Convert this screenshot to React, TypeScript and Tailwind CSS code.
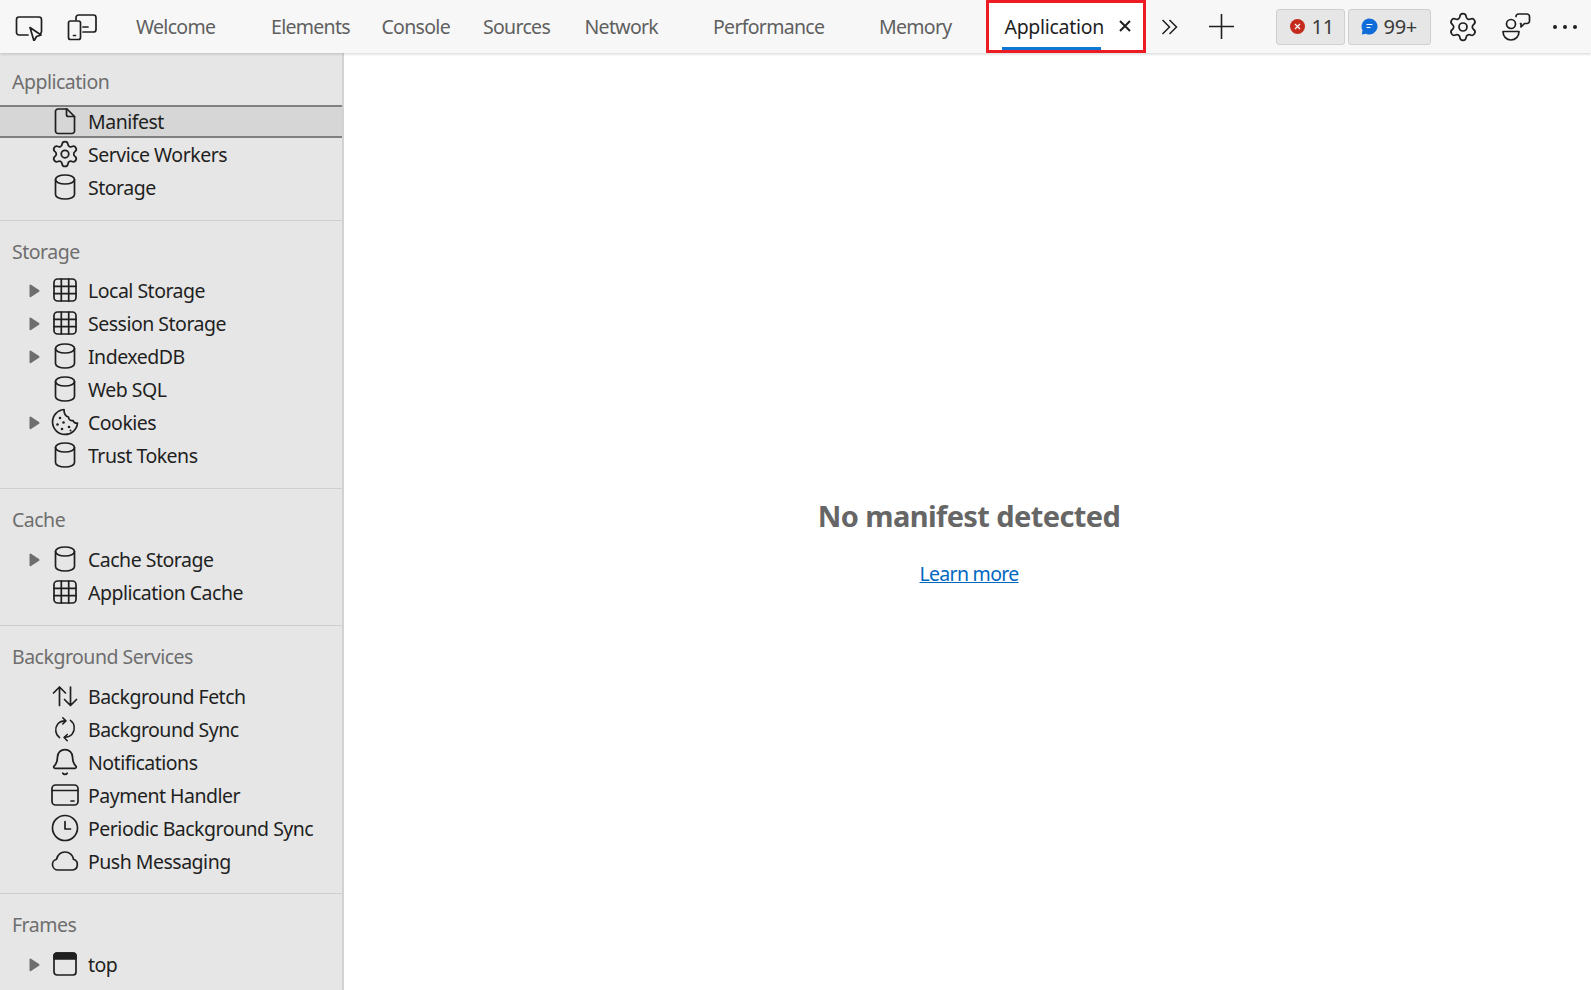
import React from "react";
import { Settings, Bell } from "lucide-react";

const S = ({ children, w = 28, h = 28, sw = 1.7, vb }: { children: React.ReactNode; w?: number; h?: number; sw?: number; vb?: string }) => (
  <svg width={w} height={h} viewBox={vb ?? `0 0 ${w} ${h}`} fill="none" stroke="#1f1f1f" strokeWidth={sw} strokeLinecap="round" strokeLinejoin="round">
    {children}
  </svg>
);

const Cyl = () => (
  <S>
    <path d="M4.500 6.500C4.500 4 8.500 2 14 2s9.500 2 9.500 4.500v15c0 2.500-4 4.500-9.500 4.500s-9.500-2-9.500-4.500z" />
    <path d="M4.500 6.500c0 2.500 4 4.500 9.500 4.500s9.500-2 9.500-4.500" />
  </S>
);
const Grid = () => (
  <S>
    <rect x="3" y="3" width="22" height="22" rx="3.500" />
    <path d="M10.300 3v22M17.700 3v22M3 10.300h22M3 17.700h22" />
  </S>
);
const Doc = () => (
  <S>
    <path d="M4.500 4.500A2.500 2.500 0 0 1 7 2h9l7.500 7.500v14.500a2.500 2.500 0 0 1-2.500 2.500H7A2.500 2.500 0 0 1 4.500 24z" />
    <path d="M15.500 2v5.500a2 2 0 0 0 2 2h6" />
  </S>
);
const Gear = () => <Settings size={30} strokeWidth={1.4} color="#1f1f1f" />;
const CookieI = () => (
  <S>
    <path d="M13 1.500A12.500 12.500 0 1 0 26.500 15c-2 .5-4-.5-4.500-2.500-2.500.5-4.500-1-4.500-3.500-2.500-.5-4.500-3.500-4.500-7.500z" />
    <g fill="#1f1f1f" stroke="none">
      <circle cx="9" cy="10" r="1.300" />
      <circle cx="6.500" cy="16.500" r="1.300" />
      <circle cx="12.500" cy="14.500" r="1.300" />
      <circle cx="11" cy="21" r="1.300" />
      <circle cx="18" cy="19" r="1.300" />
      <circle cx="19.500" cy="22.500" r="1" />
    </g>
  </S>
);
const Arrows = () => (
  <S>
    <path d="M8.500 23.500V5M2.500 11 8.500 5l6 6M19.500 5v18.500M13.500 17.500l6 6 6-6" />
  </S>
);
const Sync = () => (
  <S vb="-1.500 -1 31 30">
    <path d="M8 23.500C3 20 2.500 13 6 8.500c2-2.500 5-3.500 8.500-3.500" />
    <path d="M11.500 1.500 15 5l-3.500 3.500" />
    <path d="M20 4.500c5 3.500 5.500 10.500 2 15-2 2.500-5 3.500-8.500 3.500" />
    <path d="M16.500 27 13 23.500l3.500-3.500" />
  </S>
);
const BellI = () => <Bell size={30} strokeWidth={1.4} color="#1f1f1f" />;
const Card = () => (
  <S>
    <rect x="1" y="4" width="26" height="20" rx="3.500" />
    <path d="M1 9.500h26M20 20h3" />
  </S>
);
const ClockI = () => (
  <S>
    <circle cx="14" cy="14" r="12.500" />
    <path d="M14 7.500v7.500h5.500" />
  </S>
);
const CloudI = () => (
  <S>
    <path d="M7 23a5.500 5.500 0 0 1-1.500-10.800C6.800 7.500 10.300 5 14 5c4.500 0 8 3 8.500 7.300A5.500 5.500 0 0 1 21.500 23z" />
  </S>
);
const Win = () => (
  <S>
    <rect x="3" y="3" width="22" height="22" rx="3" />
    <path d="M3 6a3 3 0 0 1 3-3h16a3 3 0 0 1 3 3V9H3z" fill="#1f1f1f" />
  </S>
);

const Caret = () => (
  <svg width="12" height="14" viewBox="0 0 12 14">
    <path d="M1.500 1.500a1 1 0 0 1 1.500-.7l8 5.300a1 1 0 0 1 0 1.600l-8 5.300a1 1 0 0 1-1.500-.7z" fill="#6e6e6e" />
  </svg>
);

type Row = { label: string; icon: React.ReactNode; caret?: boolean; selected?: boolean };
type Group = { title: string; rows: Row[]; box: string; head: string };

const headBase = "pl-[12px] text-[#6e6e6e] tracking-[-0.5px] leading-[34px]";

const groups: Group[] = [
  {
    title: "Application",
    box: "pb-[16px]",
    head: "h-[52px] pt-[12px]",
    rows: [
      { label: "Manifest", icon: <Doc />, selected: true },
      { label: "Service Workers", icon: <Gear /> },
      { label: "Storage", icon: <Cyl /> },
    ],
  },
  {
    title: "Storage",
    box: "border-t border-[#cfcfcf] pb-[15.5px]",
    head: "h-[53.5px] pt-[14px]",
    rows: [
      { label: "Local Storage", icon: <Grid />, caret: true },
      { label: "Session Storage", icon: <Grid />, caret: true },
      { label: "IndexedDB", icon: <Cyl />, caret: true },
      { label: "Web SQL", icon: <Cyl /> },
      { label: "Cookies", icon: <CookieI />, caret: true },
      { label: "Trust Tokens", icon: <Cyl /> },
    ],
  },
  {
    title: "Cache",
    box: "border-t border-[#cfcfcf] pb-[16px]",
    head: "h-[54px] pt-[14px]",
    rows: [
      { label: "Cache Storage", icon: <Cyl />, caret: true },
      { label: "Application Cache", icon: <Grid /> },
    ],
  },
  {
    title: "Background Services",
    box: "border-t border-[#cfcfcf] pb-[15px]",
    head: "h-[54px] pt-[14px]",
    rows: [
      { label: "Background Fetch", icon: <Arrows /> },
      { label: "Background Sync", icon: <Sync /> },
      { label: "Notifications", icon: <BellI /> },
      { label: "Payment Handler", icon: <Card /> },
      { label: "Periodic Background Sync", icon: <ClockI /> },
      { label: "Push Messaging", icon: <CloudI /> },
    ],
  },
  {
    title: "Frames",
    box: "border-t border-[#cfcfcf] pb-[16px]",
    head: "h-[54px] pt-[14px]",
    rows: [{ label: "top", icon: <Win />, caret: true }],
  },
];

const tabs = [
  { t: "Welcome", c: "w-[135px]" },
  { t: "Elements", c: "w-[110.5px]" },
  { t: "Console", c: "w-[101.5px]" },
  { t: "Sources", c: "w-[101.5px]" },
  { t: "Network", c: "w-[128.5px]" },
  { t: "Performance", c: "w-[166px]" },
  { t: "Memory", c: "w-[107px]" },
];

const Inspect = () => (
  <S w={28} h={28} sw={1.7}>
    <path d="M13 22H4a2.500 2.500 0 0 1-2.500-2.500v-13A2.500 2.500 0 0 1 4 4h20a2.500 2.500 0 0 1 2.500 2.500v12a2.500 2.500 0 0 1-1 2" />
    <path d="M15 14.500 26 22l-4.500 1.500-2.500 4.500z" />
  </S>
);
const Device = () => (
  <S w={30} h={28} sw={1.7}>
    <path d="M9 7V4.500A2.500 2.500 0 0 1 11.500 2h15A2.500 2.500 0 0 1 29 4.500v12a2.500 2.500 0 0 1-2.500 2.500H16" />
    <rect x="1.500" y="8" width="12" height="18.500" rx="2" />
    <path d="M6.500 22.500h2M16 14h5" />
  </S>
);

const Feedback = () => (
  <S w={30} h={30} sw={1.7}>
    <circle cx="10" cy="12" r="4.500" />
    <path d="M2 19.500h16c0 5-3.500 8.500-8 8.500s-8-3.500-8-8.500z" />
    <path d="M15 4.500A2.500 2.500 0 0 1 17.500 2h8.500a2.500 2.500 0 0 1 2.500 2.500v4.500a2.500 2.500 0 0 1-2.500 2.500h-2.500l-3.500 3.500v-3.500h-.5" />
  </S>
);

export default function App() {
  return (
    <div className="w-[1591px] h-[990px] overflow-hidden bg-white flex flex-col font-['Noto_Sans','Open_Sans',sans-serif] text-[19.5px]">
      <header className="relative z-10 h-[53px] shrink-0 bg-[#f7f7f7] shadow-[0_1px_3px_rgba(0,0,0,0.18)] flex items-center text-[#5f5f5f]">
        <div className="ml-[15px] w-[28px] flex justify-center"><Inspect /></div>
        <div className="ml-[24px] w-[30px] flex justify-center"><Device /></div>
        <nav className="ml-[39px] flex items-center h-full">
          {tabs.map((x) => (
            <div key={x.t} className={`${x.c} shrink-0 tracking-[-0.7px]`}>{x.t}</div>
          ))}
          <div className="relative w-[160px] h-[53px] shrink-0 border-[3px] border-[#ed1c24] bg-white flex items-center pl-[15.5px] text-[#1f1f1f] tracking-[-0.3px]">
            <span>Application</span>
            <svg className="absolute left-[128px] top-[15px]" width="16" height="16" viewBox="0 0 16 16" stroke="#1f1f1f" strokeWidth="2"><path d="M3 3l10 10M13 3L3 13" /></svg>
            <div className="absolute left-[13px] bottom-0 w-[99px] h-[3px] bg-[#0a78d4]" />
          </div>
        </nav>
        <div className="ml-[15px] w-[18px] flex justify-center">
          <svg width="18" height="18" viewBox="0 0 18 18" fill="none" stroke="#1f1f1f" strokeWidth="1.500"><path d="M1.500 2l7 7-7 7M8.500 2l7 7-7 7" /></svg>
        </div>
        <div className="ml-[28.5px] w-[27px] flex justify-center">
          <svg width="27" height="27" viewBox="0 0 27 27" stroke="#1f1f1f" strokeWidth="1.600"><path d="M13.500 1v25M1 13.500h25" /></svg>
        </div>
        <div className="ml-[41px] h-[36px] w-[69px] rounded-[3px] bg-[#e6e6e6] border border-[#cfcfcf] flex items-center pl-[13px] gap-[7px] text-[#3a3a3a]">
          <svg width="15" height="15" viewBox="0 0 15 15"><circle cx="7.500" cy="7.500" r="7.500" fill="#c42b1c" /><path d="M5 5l5 5M10 5l-5 5" stroke="#fff" strokeWidth="1.200" /></svg>
          <span className="tracking-[-0.1px] text-[20px]">11</span>
        </div>
        <div className="ml-[3px] h-[36px] w-[83px] rounded-[3px] bg-[#e6e6e6] border border-[#cfcfcf] flex items-center pl-[12px] gap-[6px] text-[#3a3a3a]">
          <svg width="17" height="17" viewBox="0 0 17 17"><path d="M8.500 0.500a8 8 0 1 1-3.500 15.200L0.800 16.500 1.500 12.300A8 8 0 0 1 8.500 0.500z" fill="#0f6cd9" /><path d="M5.500 6.500h6M5.500 9.500h4" stroke="#fff" strokeWidth="1.100" /></svg>
          <span className="tracking-[-0.3px] text-[20px]">99+</span>
        </div>
        <div className="ml-[16px] w-[32px] flex justify-center"><Settings size={32} strokeWidth={1.3} color="#1f1f1f" /></div>
        <div className="ml-[22px] w-[30px] flex justify-center"><Feedback /></div>
        <div className="ml-[22px] flex gap-[6px]">
          <div className="w-[4px] h-[4px] rounded-full bg-[#1f1f1f]" />
          <div className="w-[4px] h-[4px] rounded-full bg-[#1f1f1f]" />
          <div className="w-[4px] h-[4px] rounded-full bg-[#1f1f1f]" />
        </div>
      </header>
      <div className="flex-1 flex min-h-0">
        <aside className="w-[344px] shrink-0 bg-[#e6e6e6] border-r-2 border-[#d2d2d2] overflow-hidden">
          {groups.map((g) => (
            <section key={g.title} className={g.box}>
              <div className={`${g.head} ${headBase}`}>{g.title}</div>
              {g.rows.map((r) => (
                <div
                  key={r.label}
                  className={r.selected ? "h-[33px] flex items-center bg-[#d6d6d6] border-y-2 border-[#808080] text-[#1f1f1f]" : "h-[33px] flex items-center text-[#1f1f1f]"}
                >
                  <div className="w-[49.5px] shrink-0 pl-[28px] flex items-center">{r.caret && <Caret />}</div>
                  <div className="w-[30px] h-[30px] shrink-0 flex items-center justify-center -translate-y-[1px]">{r.icon}</div>
                  <span className="ml-[8.5px] tracking-[-0.5px] whitespace-nowrap">{r.label}</span>
                </div>
              ))}
            </section>
          ))}
        </aside>
        <main className="flex-1 flex flex-col items-center pt-[443px] pl-[3px]">
          <h1 className="text-[29px] font-bold text-[#666666] tracking-[-0.6px] leading-[40px]">No manifest detected</h1>
          <a href="#" className="mt-[22.5px] text-[#0067c0] underline tracking-[-0.7px]">Learn more</a>
        </main>
      </div>
    </div>
  );
}
